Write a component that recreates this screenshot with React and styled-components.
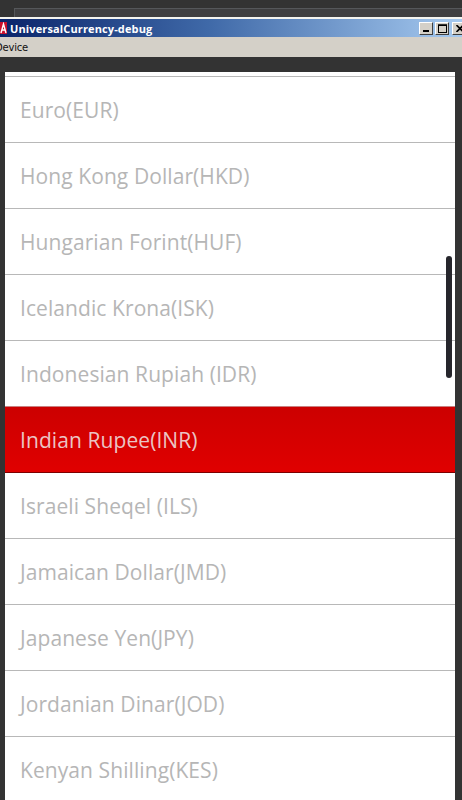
import React from "react";
import styled, { createGlobalStyle } from "styled-components";

const currencies = [
  "Euro(EUR)",
  "Hong Kong Dollar(HKD)",
  "Hungarian Forint(HUF)",
  "Icelandic Krona(ISK)",
  "Indonesian Rupiah (IDR)",
  "Indian Rupee(INR)",
  "Israeli Sheqel (ILS)",
  "Jamaican Dollar(JMD)",
  "Japanese Yen(JPY)",
  "Jordanian Dinar(JOD)",
  "Kenyan Shilling(KES)",
];

const GlobalStyle = createGlobalStyle`
  html, body {
    margin: 0;
    padding: 0;
    width: 462px;
    height: 800px;
    overflow: hidden;
    background: #333333;
  }
`;

const Screen = styled.div`
  width: 462px;
  height: 800px;
  display: flex;
  flex-direction: column;
  overflow: hidden;
  background: #333333;
`;

const TopStrip = styled.div`
  height: 17px;
  padding: 8px 0 0 14px;
  box-sizing: border-box;
  flex: none;
`;

const BehindWindow = styled.div`
  height: 9px;
  background: #3f3f41;
  border-top: 1px solid #55575a;
  border-left: 1px solid #55575a;
  box-sizing: border-box;
`;

const TitleBar = styled.div`
  height: 20px;
  flex: none;
  display: flex;
  align-items: center;
  border-top: 2px solid #f4f4f0;
  box-sizing: border-box;
  background: linear-gradient(to right, #0a246a 0%, #3f69a8 45%, #a6caf0 100%);
`;

const AppIcon = styled.svg`
  width: 7px;
  height: 12px;
  flex: none;
`;

const Title = styled.span`
  margin-left: 3px;
  flex: 1;
  color: #ffffff;
  font: bold 11px "Open Sans", sans-serif;
  letter-spacing: 0.13px;
  white-space: nowrap;
`;

const WindowButton = styled.div`
  width: 14px;
  height: 13px;
  margin-left: 2px;
  flex: none;
  display: flex;
  align-items: center;
  justify-content: center;
  box-sizing: border-box;
  background: #d4d0c8;
  border: 1px solid;
  border-color: #ffffff #404040 #404040 #ffffff;
  &:last-child {
    width: 15px;
    margin-left: 3px;
    margin-right: -5px;
  }
`;

const MenuBar = styled.div`
  height: 20px;
  flex: none;
  background: #d4d0c8;
  display: flex;
  align-items: center;
  overflow: hidden;
`;

const MenuItem = styled.span`
  margin-left: -5px;
  color: #111111;
  font: 10px "DejaVu Sans", sans-serif;
  letter-spacing: -0.2px;
`;

const ListFrame = styled.div`
  position: relative;
  flex: 1;
  margin: 15px 7px 0 5px;
  padding-top: 4px;
  background: #ffffff;
  overflow: hidden;
`;

const Row = styled.div`
  position: ${(p) => (p.$selected ? "relative" : "static")};
  height: 66px;
  box-sizing: border-box;
  display: flex;
  align-items: center;
  padding-left: 15px;
  border-top: 1px solid ${(p) => (p.$selected ? "#c98080" : "#b8b8b8")};
  box-shadow: ${(p) => (p.$selected ? "0 1px 0 #7d0000" : "none")};
  background: ${(p) => (p.$selected ? "linear-gradient(to bottom, #cc0000, #e00000)" : "#ffffff")};
  color: ${(p) => (p.$selected ? "#ebc4c4" : "#b6b6b6")};
  font: 21px "Open Sans", sans-serif;
  letter-spacing: 0.08px;
  white-space: nowrap;
`;

const ScrollThumb = styled.div`
  position: absolute;
  top: 184px;
  right: 3px;
  width: 6px;
  height: 122px;
  border-radius: 3px;
  background: #26262c;
`;

export default function App() {
  return (
    <Screen>
      <GlobalStyle />
      <TopStrip>
        <BehindWindow />
      </TopStrip>
      <TitleBar>
        <AppIcon viewBox="0 0 7 12">
          <rect width="7" height="12" fill="#c8102e" />
          <path d="M1 11 L3.5 2 L6 11 M2 8 H5" fill="none" stroke="#fff" strokeWidth="1.4" />
        </AppIcon>
        <Title>UniversalCurrency-debug</Title>
        <WindowButton>
          <svg width="7" height="7" viewBox="0 0 7 7">
            <rect x="0" y="5" width="6" height="2" fill="#000" />
          </svg>
        </WindowButton>
        <WindowButton>
          <svg width="9" height="9" viewBox="0 0 9 9">
            <rect x="0.5" y="1" width="8" height="7.5" fill="none" stroke="#000" />
            <rect x="0" y="0.5" width="9" height="1.5" fill="#000" />
          </svg>
        </WindowButton>
        <WindowButton>
          <svg width="8" height="7" viewBox="0 0 8 7">
            <path d="M0.5 0 L7.5 7 M7.5 0 L0.5 7" stroke="#000" strokeWidth="1.6" />
          </svg>
        </WindowButton>
      </TitleBar>
      <MenuBar>
        <MenuItem>Device</MenuItem>
      </MenuBar>
      <ListFrame>
        {currencies.map((name) => (
          <Row key={name} $selected={name === "Indian Rupee(INR)"}>
            {name}
          </Row>
        ))}
        <ScrollThumb />
      </ListFrame>
    </Screen>
  );
}
